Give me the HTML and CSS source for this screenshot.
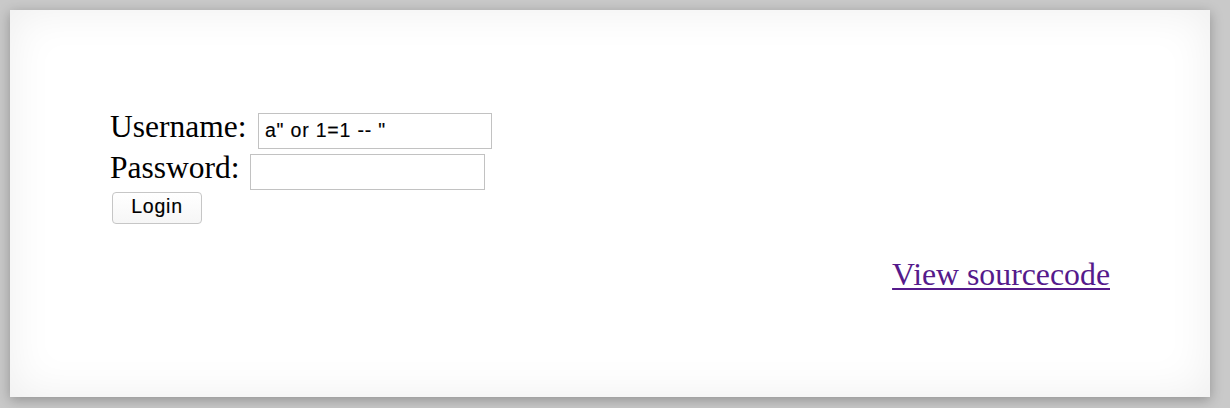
FILE: index.html
```html
<!DOCTYPE html>
<html>
<head>
<meta charset="utf-8">
<title>Login</title>
<link rel="stylesheet" href="styles.css">
</head>
<body>
<div class="panel">
  <form class="login">
    <div class="row">
      <label class="label" for="u">Username:</label>
      <input class="field field-user" id="u" type="text" value="a&quot; or 1=1 -- &quot;">
    </div>
    <div class="row">
      <label class="label" for="p">Password:</label>
      <input class="field field-pass" id="p" type="password">
    </div>
    <div class="row-btn">
      <button class="btn" type="button">Login</button>
    </div>
  </form>
  <div class="source">
    <a class="source-link" href="#">View sourcecode</a>
  </div>
</div>
</body>
</html>
```

FILE: styles.css
```css
html, body {
  margin: 0;
  padding: 0;
}

body {
  background: #c9c9c9;
  width: 1230px;
  height: 408px;
  overflow: hidden;
  padding-top: 10px;
  box-sizing: border-box;
}

.panel {
  margin-left: 10px;
  width: 1200px;
  height: 387px;
  box-sizing: border-box;
  padding: 0 100px;
  background: #ffffff;
  box-shadow:
    inset 0 0 45px rgba(0, 0, 0, 0.07),
    0 3px 12px rgba(0, 0, 0, 0.28);
  font-family: "Liberation Serif", "Times New Roman", serif;
  overflow: hidden;
}

.login {
  margin: 0;
  padding-top: 99px;
}

.row {
  display: flex;
  align-items: baseline;
  height: 41px;
}

.label {
  font-size: 31.5px;
  line-height: 36px;
  color: #000;
}

.field {
  box-sizing: border-box;
  height: 36px;
  margin: 0;
  border: 1px solid #c2c2c2;
  border-radius: 0;
  padding: 0 6px;
  background: #fff;
  font-family: "Liberation Sans", Arial, sans-serif;
  font-size: 19.5px;
  letter-spacing: 0.8px;
  -webkit-text-stroke: 0.15px #000;
  color: #000;
  outline: none;
}

.field-user {
  width: 234px;
  margin-left: 11.5px;
}

.field-pass {
  width: 235px;
  margin-left: 10.5px;
}

.row-btn {
  padding-top: 1px;
  padding-left: 2px;
}

.btn {
  width: 90px;
  height: 32px;
  margin: 0;
  padding: 0 0 3px 0;
  border: 1px solid #c6c6c6;
  border-radius: 4px;
  background: linear-gradient(#ffffff, #f6f6f6);
  font-family: "Liberation Sans", Arial, sans-serif;
  font-size: 19.5px;
  letter-spacing: 0.8px;
  -webkit-text-stroke: 0.15px #000;
  color: #000;
}

.source {
  text-align: right;
  margin-top: 33px;
  font-size: 31.8px;
  line-height: 36px;
}

.source-link {
  color: #551a8b;
  text-decoration: underline;
  text-decoration-thickness: 2px;
  text-underline-offset: 3px;
}
```
